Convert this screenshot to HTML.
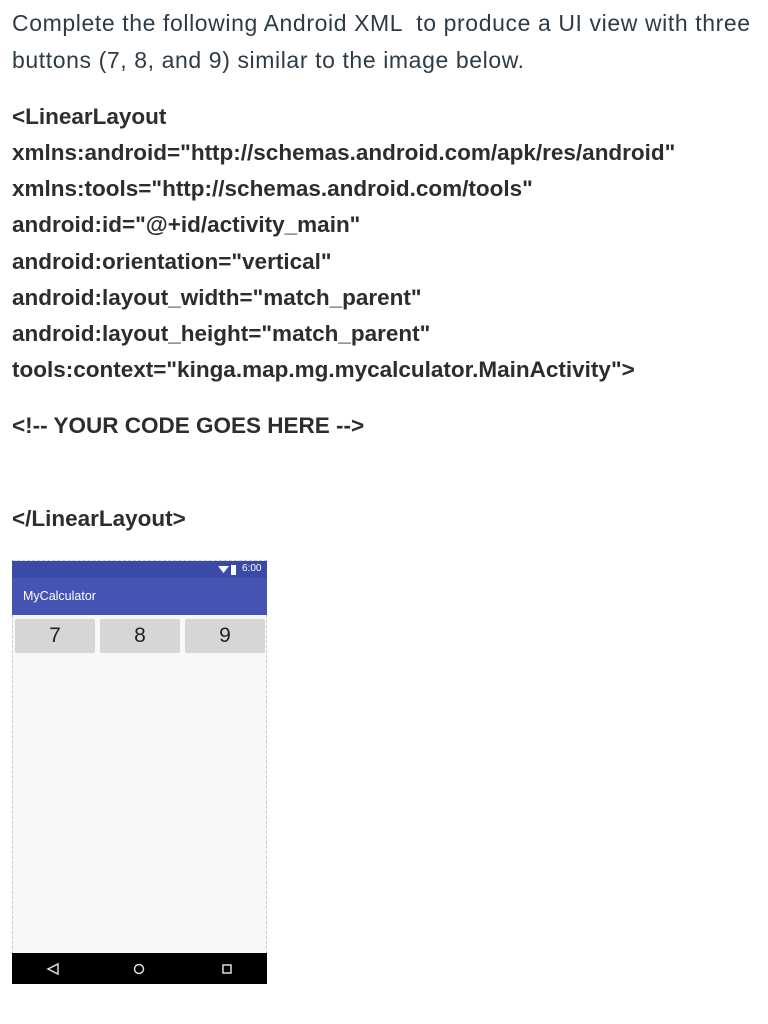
<!DOCTYPE html>
<html><head><meta charset="utf-8"><style>
body{margin:0;background:#fff;width:768px;height:1024px;position:relative;font-family:"Liberation Sans",sans-serif;color:#2d3b45;overflow:hidden}
.t{position:absolute;left:12px;white-space:pre;}
.p{font-size:23px;letter-spacing:0.6px}
.c{font-size:22.5px;font-weight:bold;color:#2d2d2d}
.ph{position:absolute;left:12px;top:560px;width:255px;height:424px;background:#f8f8f8;border:1px dashed #ccc;border-bottom:none;box-sizing:border-box}
</style></head><body>
<div class="t p" style="top:10px">Complete the following Android XML  to produce a UI view with three</div>
<div class="t p" style="top:47px">buttons (7, 8, and 9) similar to the image below.</div>
<div class="t c" style="top:104px">&lt;LinearLayout</div>
<div class="t c" style="top:140px">xmlns:android="http://schemas.android.com/apk/res/android"</div>
<div class="t c" style="top:176px">xmlns:tools="http://schemas.android.com/tools"</div>
<div class="t c" style="top:212px">android:id="@+id/activity_main"</div>
<div class="t c" style="top:249px">android:orientation="vertical"</div>
<div class="t c" style="top:285px">android:layout_width="match_parent"</div>
<div class="t c" style="top:321px">android:layout_height="match_parent"</div>
<div class="t c" style="top:357px">tools:context="kinga.map.mg.mycalculator.MainActivity"&gt;</div>
<div class="t c" style="top:413px">&lt;!-- YOUR CODE GOES HERE --&gt;</div>
<div class="t c" style="top:506px">&lt;/LinearLayout&gt;</div>
<div class="ph"></div>
<div style="position:absolute;left:12px;top:561px;width:255px;height:17px;background:#3a4aa6"></div>
<div style="position:absolute;left:12px;top:578px;width:255px;height:37px;background:#4553b3"></div>
<svg style="position:absolute;left:218px;top:564px" width="20" height="12"><polygon points="0,2 11,2 5.5,9" fill="#fff"/><rect x="13" y="1" width="5" height="10" fill="#fff"/></svg>
<div style="position:absolute;left:242px;top:563px;font-size:10px;color:#fff">6:00</div>
<div style="position:absolute;left:23px;top:589px;font-size:12.5px;color:#fff">MyCalculator</div>
<div style="position:absolute;left:15px;top:619px;width:80px;height:34px;background:#d6d6d6;border-radius:2px;text-align:center;line-height:34px;font-size:21px;color:#222">7</div>
<div style="position:absolute;left:100px;top:619px;width:80px;height:34px;background:#d6d6d6;border-radius:2px;text-align:center;line-height:34px;font-size:21px;color:#222">8</div>
<div style="position:absolute;left:185px;top:619px;width:80px;height:34px;background:#d6d6d6;border-radius:2px;text-align:center;line-height:34px;font-size:21px;color:#222">9</div>
<div style="position:absolute;left:12px;top:953px;width:255px;height:31px;background:#000"></div>
<svg style="position:absolute;left:12px;top:953px" width="255" height="31"><polygon points="46,11 46,21 36,16" fill="none" stroke="#ddd" stroke-width="1.5"/><circle cx="127" cy="16" r="4.5" fill="none" stroke="#ddd" stroke-width="1.5"/><rect x="211" y="12" width="8" height="8" fill="none" stroke="#ddd" stroke-width="1.5"/></svg>
</body></html>
